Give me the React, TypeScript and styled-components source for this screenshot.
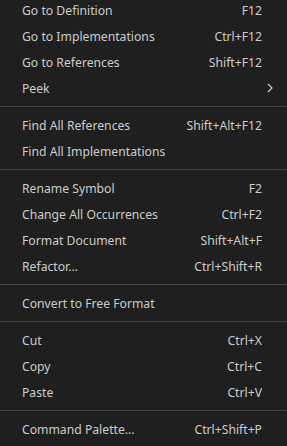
import React from "react";
import styled, { createGlobalStyle } from "styled-components";

const GlobalStyle = createGlobalStyle`
  html, body {
    margin: 0;
    padding: 0;
    background: #1f1f1f;
    overflow: hidden;
  }
`;

type Entry =
  | { kind: "item"; label: string; keys?: string; submenu?: boolean }
  | { kind: "sep" };

const entries: Entry[] = [
  { kind: "item", label: "Go to Definition", keys: "F12" },
  { kind: "item", label: "Go to Implementations", keys: "Ctrl+F12" },
  { kind: "item", label: "Go to References", keys: "Shift+F12" },
  { kind: "item", label: "Peek", submenu: true },
  { kind: "sep" },
  { kind: "item", label: "Find All References", keys: "Shift+Alt+F12" },
  { kind: "item", label: "Find All Implementations" },
  { kind: "sep" },
  { kind: "item", label: "Rename Symbol", keys: "F2" },
  { kind: "item", label: "Change All Occurrences", keys: "Ctrl+F2" },
  { kind: "item", label: "Format Document", keys: "Shift+Alt+F" },
  { kind: "item", label: "Refactor...", keys: "Ctrl+Shift+R" },
  { kind: "sep" },
  { kind: "item", label: "Convert to Free Format" },
  { kind: "sep" },
  { kind: "item", label: "Cut", keys: "Ctrl+X" },
  { kind: "item", label: "Copy", keys: "Ctrl+C" },
  { kind: "item", label: "Paste", keys: "Ctrl+V" },
  { kind: "sep" },
  { kind: "item", label: "Command Palette...", keys: "Ctrl+Shift+P" },
];

const Menu = styled.div`
  width: 287px;
  height: 446px;
  overflow: hidden;
  background: #1f1f1f;
  color: #cccccc;
  font-family: "Noto Sans", "Open Sans", sans-serif;
  font-size: 12.2px;
  display: flex;
  flex-direction: column;
`;

const List = styled.ul`
  list-style: none;
  margin: -3px 0 0;
  padding: 0;
`;

const Row = styled.li`
  height: 26px;
  display: flex;
  align-items: center;
  padding: 0 25px 0 22px;
`;

const Label = styled.span`
  flex: 1;
  white-space: nowrap;
`;

const Keys = styled.span`
  white-space: nowrap;
  margin-left: 16px;
`;

const Chevron = styled.svg`
  width: 10px;
  height: 10px;
  margin-right: -13px;
`;

const Separator = styled.li`
  height: 1px;
  margin: 5px 0;
  background: #454545;
`;

export default function App() {
  return (
    <>
      <GlobalStyle />
      <Menu>
        <List>
          {entries.map((e, i) =>
            e.kind === "sep" ? (
              <Separator key={i} />
            ) : (
              <Row key={i}>
                <Label>{e.label}</Label>
                {e.keys && <Keys>{e.keys}</Keys>}
                {e.submenu && (
                  <Chevron viewBox="0 0 10 10">
                    <path d="M3 1l4 4-4 4" fill="none" stroke="#cccccc" strokeWidth="1.2" />
                  </Chevron>
                )}
              </Row>
            )
          )}
        </List>
      </Menu>
    </>
  );
}
